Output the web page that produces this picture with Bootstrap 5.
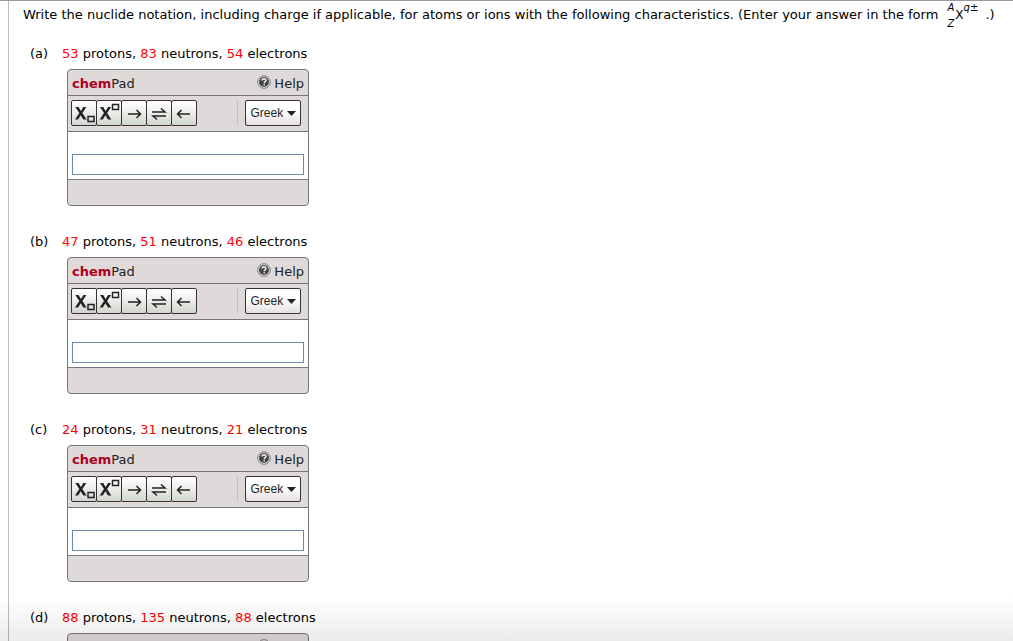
<!DOCTYPE html>
<html lang="en">
<head>
<meta charset="utf-8">
<meta name="viewport" content="width=device-width, initial-scale=1">
<title>Nuclide notation</title>
<link href="https://cdn.jsdelivr.net/npm/bootstrap@5.3.0/dist/css/bootstrap.min.css" rel="stylesheet">
<style>
body { font: 13px/20px Verdana, "DejaVu Sans", sans-serif; color: #000; background: #fff; }
.sheet { border-top: 1px solid #999; padding-left: 8px; }
.question { border-left: 1px solid #bbb; padding: 4px 0 0 14px; }
.sheet::after { content: ""; position: absolute; inset: auto 0 0 0; height: 44px; background: linear-gradient(rgba(0,0,0,0), rgba(0,0,0,.08)); pointer-events: none; }
.prompt { height: 39px; }
.num { color: #f00; }
.nuclide { font-style: italic; font-size: 10px; line-height: 10px; margin: 0 3px 0 5px; }
.nuclide .stack { display: inline-flex; flex-direction: column; justify-content: space-between; height: 26px; vertical-align: top; margin: -2px 1px 0 0; text-align: right; }
.nuclide .sym { font-style: normal; font-size: 12px; line-height: 20px; }
.nuclide .charge { vertical-align: top; position: relative; top: -2px; }
.part { padding-left: 7px; margin-bottom: 26px; }
.part-label { width: 32px; }
.pad { width: 242px; margin: 5px 0 0 37px; border: 1px solid #777; border-radius: 4px; background: #dfd9d9; overflow: hidden; color: #222; }
.pad-head { height: 26px; border-bottom: 1px solid #777; padding: 3px 4px 0; line-height: 21px; }
.brand { color: #b0001e; }
.help { color: #222; text-decoration: none; }
.help svg { margin: 2px 3px 0 0; }
.tools { height: 36px; border-bottom: 1px solid #777; padding: 4px 7px 0 3px; }
.tool { width: 26px; height: 26px; padding: 0; border: 1px solid #333; border-radius: 2px; background: linear-gradient(#fff, #f1f1ef 40%, #d2d5cf); }
.tool + .tool { margin-left: -1px; }
.tool svg { display: block; }
.greek { width: 56px; height: 26px; padding: 0; border: 1px solid #333; border-radius: 2px; background: linear-gradient(#fff, #fff 40%, #e4e0e0); font: 12px/24px "Liberation Sans", Arial, sans-serif; color: #222; }
.divide { width: 1px; height: 26px; margin-right: 7px; background: #c4bfbf; }
.entry { height: 48px; border-bottom: 1px solid #777; background: #fff; padding: 22px 4px 0; }
.formula { display: block; width: 100%; height: 21px; border: 1px solid #6b8cae; padding: 0 3px; background: #fff; }
.pad-foot { height: 25px; }
</style>
</head>
<body>
<svg class="d-none" aria-hidden="true">
  <symbol id="sub" viewBox="0 0 24 24"><path d="M3.300 6h3.200l2.400 4 2.500-4h3l-4 6 4.200 6.500h-3.300l-2.600-4.200-2.600 4.200H3L7.300 12z" fill="#222"/><path d="M16 15.500h6v5h-6z" fill="none" stroke="#222" stroke-width="1.500"/></symbol>
  <symbol id="sup" viewBox="0 0 24 24"><path d="M3 6h3.200l2.400 4 2.500-4h3l-4 6 4.200 6.500h-3.300l-2.600-4.200-2.600 4.200H2.700L7 12z" fill="#222"/><path d="M15.500 3.500h6v5h-6z" fill="none" stroke="#222" stroke-width="1.500"/></symbol>
  <symbol id="right" viewBox="0 0 24 24"><path d="M6 13h12.500M14.500 9l4 4-4 4" fill="none" stroke="#222" stroke-width="1.500"/></symbol>
  <symbol id="left" viewBox="0 0 24 24"><path d="M5.500 13H18M9.500 9l-4 4 4 4" fill="none" stroke="#222" stroke-width="1.500"/></symbol>
  <symbol id="both" viewBox="0 0 24 24"><path d="M5 11h13l-4-3.500M19 15H6l4 3.500" fill="none" stroke="#222" stroke-width="1.500"/></symbol>
  <symbol id="ask" viewBox="0 0 14 14"><circle cx="7" cy="7" r="6.300" fill="#eee" stroke="#666" stroke-width=".9"/><circle cx="7" cy="7" r="5" fill="#444"/><path d="M5.200 5.600C5.200 3.200 9 3.300 8.900 5.500 8.900 6.800 7.200 6.700 7.200 8.200M7.200 9.200v1.400" fill="none" stroke="#fff" stroke-width="1.500"/></symbol>
</svg>
<main class="sheet position-relative vh-100 overflow-hidden">
<div class="question">
  <div class="prompt">Write the nuclide notation, including charge if applicable, for atoms or ions with the following characteristics. (Enter your answer in the form <span class="nuclide text-nowrap"><span class="stack"><span>A</span><span>Z</span></span><span class="sym">X</span><span class="charge">q±</span></span> .)</div>

  <section class="part">
    <div class="d-flex"><span class="part-label">(a)</span><span><span class="num">53</span> protons, <span class="num">83</span> neutrons, <span class="num">54</span> electrons</span></div>
    <div class="pad">
      <div class="pad-head d-flex justify-content-between"><span><b class="brand">chem</b>Pad</span><a class="help d-flex align-items-start" href="#"><svg width="14" height="14"><use href="#ask"/></svg>Help</a></div>
      <div class="tools d-flex">
        <button class="tool" aria-label="Subscript"><svg width="24" height="24"><use href="#sub"/></svg></button><button class="tool" aria-label="Superscript"><svg width="24" height="24"><use href="#sup"/></svg></button><button class="tool" aria-label="Right arrow"><svg width="24" height="24"><use href="#right"/></svg></button><button class="tool" aria-label="Equilibrium"><svg width="24" height="24"><use href="#both"/></svg></button><button class="tool" aria-label="Left arrow"><svg width="24" height="24"><use href="#left"/></svg></button>
        <span class="divide ms-auto"></span><button class="greek">Greek <svg width="9" height="5"><path d="M0 0h9L4.500 5z" fill="#222"/></svg></button>
      </div>
      <div class="entry"><input class="formula" type="text" aria-label="Answer (a)"></div>
      <div class="pad-foot"></div>
    </div>
  </section>

  <section class="part">
    <div class="d-flex"><span class="part-label">(b)</span><span><span class="num">47</span> protons, <span class="num">51</span> neutrons, <span class="num">46</span> electrons</span></div>
    <div class="pad">
      <div class="pad-head d-flex justify-content-between"><span><b class="brand">chem</b>Pad</span><a class="help d-flex align-items-start" href="#"><svg width="14" height="14"><use href="#ask"/></svg>Help</a></div>
      <div class="tools d-flex">
        <button class="tool" aria-label="Subscript"><svg width="24" height="24"><use href="#sub"/></svg></button><button class="tool" aria-label="Superscript"><svg width="24" height="24"><use href="#sup"/></svg></button><button class="tool" aria-label="Right arrow"><svg width="24" height="24"><use href="#right"/></svg></button><button class="tool" aria-label="Equilibrium"><svg width="24" height="24"><use href="#both"/></svg></button><button class="tool" aria-label="Left arrow"><svg width="24" height="24"><use href="#left"/></svg></button>
        <span class="divide ms-auto"></span><button class="greek">Greek <svg width="9" height="5"><path d="M0 0h9L4.500 5z" fill="#222"/></svg></button>
      </div>
      <div class="entry"><input class="formula" type="text" aria-label="Answer (b)"></div>
      <div class="pad-foot"></div>
    </div>
  </section>

  <section class="part">
    <div class="d-flex"><span class="part-label">(c)</span><span><span class="num">24</span> protons, <span class="num">31</span> neutrons, <span class="num">21</span> electrons</span></div>
    <div class="pad">
      <div class="pad-head d-flex justify-content-between"><span><b class="brand">chem</b>Pad</span><a class="help d-flex align-items-start" href="#"><svg width="14" height="14"><use href="#ask"/></svg>Help</a></div>
      <div class="tools d-flex">
        <button class="tool" aria-label="Subscript"><svg width="24" height="24"><use href="#sub"/></svg></button><button class="tool" aria-label="Superscript"><svg width="24" height="24"><use href="#sup"/></svg></button><button class="tool" aria-label="Right arrow"><svg width="24" height="24"><use href="#right"/></svg></button><button class="tool" aria-label="Equilibrium"><svg width="24" height="24"><use href="#both"/></svg></button><button class="tool" aria-label="Left arrow"><svg width="24" height="24"><use href="#left"/></svg></button>
        <span class="divide ms-auto"></span><button class="greek">Greek <svg width="9" height="5"><path d="M0 0h9L4.500 5z" fill="#222"/></svg></button>
      </div>
      <div class="entry"><input class="formula" type="text" aria-label="Answer (c)"></div>
      <div class="pad-foot"></div>
    </div>
  </section>

  <section class="part">
    <div class="d-flex"><span class="part-label">(d)</span><span><span class="num">88</span> protons, <span class="num">135</span> neutrons, <span class="num">88</span> electrons</span></div>
    <div class="pad">
      <div class="pad-head d-flex justify-content-between"><span><b class="brand">chem</b>Pad</span><a class="help d-flex align-items-start" href="#"><svg width="14" height="14"><use href="#ask"/></svg>Help</a></div>
    </div>
  </section>
</div>
</main>
<script src="https://cdn.jsdelivr.net/npm/bootstrap@5.3.0/dist/js/bootstrap.bundle.min.js"></script>
</body>
</html>
